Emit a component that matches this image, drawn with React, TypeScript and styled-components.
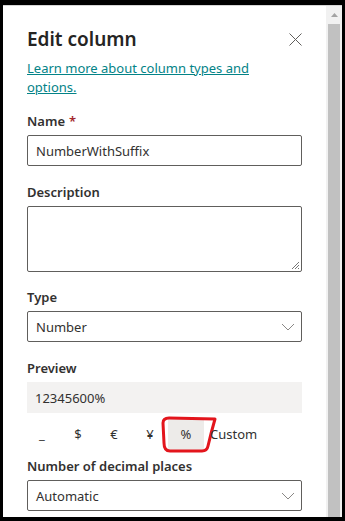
import React from "react";
import styled, { createGlobalStyle } from "styled-components";

const GlobalStyle = createGlobalStyle`
  html, body {
    margin: 0;
    padding: 0;
    background: #000;
  }
  * {
    box-sizing: border-box;
  }
`;

const font = `"Noto Sans", "Open Sans", sans-serif`;

const Frame = styled.div`
  width: 345px;
  height: 521px;
  padding: 5px 3px 4px 3px;
  display: flex;
  overflow: hidden;
`;

const Panel = styled.div`
  flex: 1;
  display: flex;
  background: #fff;
  border-top: 1px solid #d6d6d6;
  overflow: hidden;
`;

const Content = styled.div`
  flex: 1;
  padding: 18px 24px 0 24px;
  font-family: ${font};
  color: #323130;
`;

const Scrollbar = styled.div`
  width: 16px;
  background: #f1f1f1;
  display: flex;
  flex-direction: column;
  align-items: center;
  padding: 0 2px;
`;

const ScrollArrow = styled.div`
  height: 18px;
  display: flex;
  align-items: center;
  justify-content: center;
`;

const ScrollThumb = styled.div`
  flex: 1;
  width: 100%;
  background: #c1c1c1;
`;

const Header = styled.div`
  display: flex;
  align-items: center;
  justify-content: space-between;
  height: 30px;
`;

const Title = styled.h2`
  margin: 0;
  font-size: 19px;
  font-weight: 600;
  color: #252423;
`;

const CloseButton = styled.button`
  border: none;
  background: none;
  padding: 0;
  width: 14px;
  height: 14px;
  display: flex;
  align-items: center;
  justify-content: center;
`;

const LearnLink = styled.a`
  display: block;
  max-width: 250px;
  margin-top: 5px;
  font-size: 13px;
  line-height: 19px;
  color: #038387;
  text-decoration: underline;
`;

const Field = styled.div<{ $gap?: number }>`
  margin-top: ${(p) => p.$gap ?? 16}px;
`;

const Label = styled.div`
  font-size: 13px;
  font-weight: 600;
  line-height: 20px;
  margin-bottom: 4px;
  color: #323130;
`;

const Required = styled.span`
  color: #a4262c;
  margin-left: 4px;
`;

const TextBox = styled.div`
  height: 31px;
  border: 1px solid #605e5c;
  border-radius: 2px;
  padding: 0 8px;
  display: flex;
  align-items: center;
  font-size: 13px;
  color: #323130;
`;

const TextArea = styled.div`
  position: relative;
  height: 66px;
  border: 1px solid #605e5c;
  border-radius: 2px;
`;

const Grip = styled.svg`
  position: absolute;
  right: 1px;
  bottom: 1px;
`;

const Dropdown = styled(TextBox)`
  justify-content: space-between;
  padding-right: 6px;
`;

const PreviewBox = styled.div`
  height: 31px;
  background: #f3f2f1;
  padding: 0 8px;
  display: flex;
  align-items: center;
  font-size: 13px;
  color: #323130;
`;

const SymbolRow = styled.div`
  display: flex;
  margin: 5px 0 0 -3px;
  height: 32px;
`;

const SymbolButton = styled.button<{ $active?: boolean; $wide?: boolean }>`
  position: relative;
  width: ${(p) => (p.$wide ? "auto" : "36px")};
  padding: ${(p) => (p.$wide ? "0 6px" : "0")};
  height: 32px;
  border: none;
  background: ${(p) => (p.$active ? "#edebe9" : "transparent")};
  font-family: ${font};
  font-size: 13px;
  color: #323130;
  display: flex;
  align-items: center;
  justify-content: center;
`;

const Highlight = styled.svg`
  position: absolute;
  left: -8px;
  top: -5px;
  pointer-events: none;
`;

const Chevron = () => (
  <svg width="14" height="8" viewBox="0 0 14 8">
    <path d="M1 1 L7 7 L13 1" fill="none" stroke="#8a8886" strokeWidth="1" />
  </svg>
);

const symbols = ["_", "$", "€", "¥", "%"];

export default function App() {
  return (
    <>
      <GlobalStyle />
      <Frame>
        <Panel>
          <Content>
            <Header>
              <Title>Edit column</Title>
              <CloseButton aria-label="Close">
                <svg width="13" height="13" viewBox="0 0 13 13">
                  <path d="M0.5 0.5 L12.5 12.5 M12.5 0.5 L0.5 12.5" stroke="#605e5c" strokeWidth="1" />
                </svg>
              </CloseButton>
            </Header>
            <LearnLink href="#">Learn more about column types and options.</LearnLink>

            <Field $gap={14}>
              <Label>
                Name<Required>*</Required>
              </Label>
              <TextBox>NumberWithSuffix</TextBox>
            </Field>

            <Field>
              <Label>Description</Label>
              <TextArea>
                <Grip width="9" height="9" viewBox="0 0 9 9">
                  <path d="M8 1 L1 8 M8 4 L4 8 M8 7 L7 8" stroke="#777" strokeWidth="1" />
                </Grip>
              </TextArea>
            </Field>

            <Field $gap={15}>
              <Label>Type</Label>
              <Dropdown>
                Number
                <Chevron />
              </Dropdown>
            </Field>

            <Field>
              <Label>Preview</Label>
              <PreviewBox>12345600%</PreviewBox>
              <SymbolRow>
                {symbols.map((s) => (
                  <SymbolButton key={s} $active={s === "%"}>
                    {s}
                    {s === "%" && (
                      <Highlight width="60" height="44" viewBox="0 0 60 44">
                        <path
                          d="M4 30 L3 10 Q3 5 9 5 L55 6 Q51 20 48 33 Q47 38 42 38 L10 38 Q4 38 4 30 Z"
                          fill="none"
                          stroke="#e3151c"
                          strokeWidth="3"
                          strokeLinejoin="round"
                        />
                      </Highlight>
                    )}
                  </SymbolButton>
                ))}
                <SymbolButton $wide>Custom</SymbolButton>
              </SymbolRow>
            </Field>

            <Field $gap={6}>
              <Label>Number of decimal places</Label>
              <Dropdown>
                Automatic
                <Chevron />
              </Dropdown>
            </Field>
          </Content>
          <Scrollbar>
            <ScrollArrow>
              <svg width="7" height="4" viewBox="0 0 7 4">
                <path d="M3.5 0 L7 4 L0 4 Z" fill="#a3a3a3" />
              </svg>
            </ScrollArrow>
            <ScrollThumb />
          </Scrollbar>
        </Panel>
      </Frame>
    </>
  );
}
